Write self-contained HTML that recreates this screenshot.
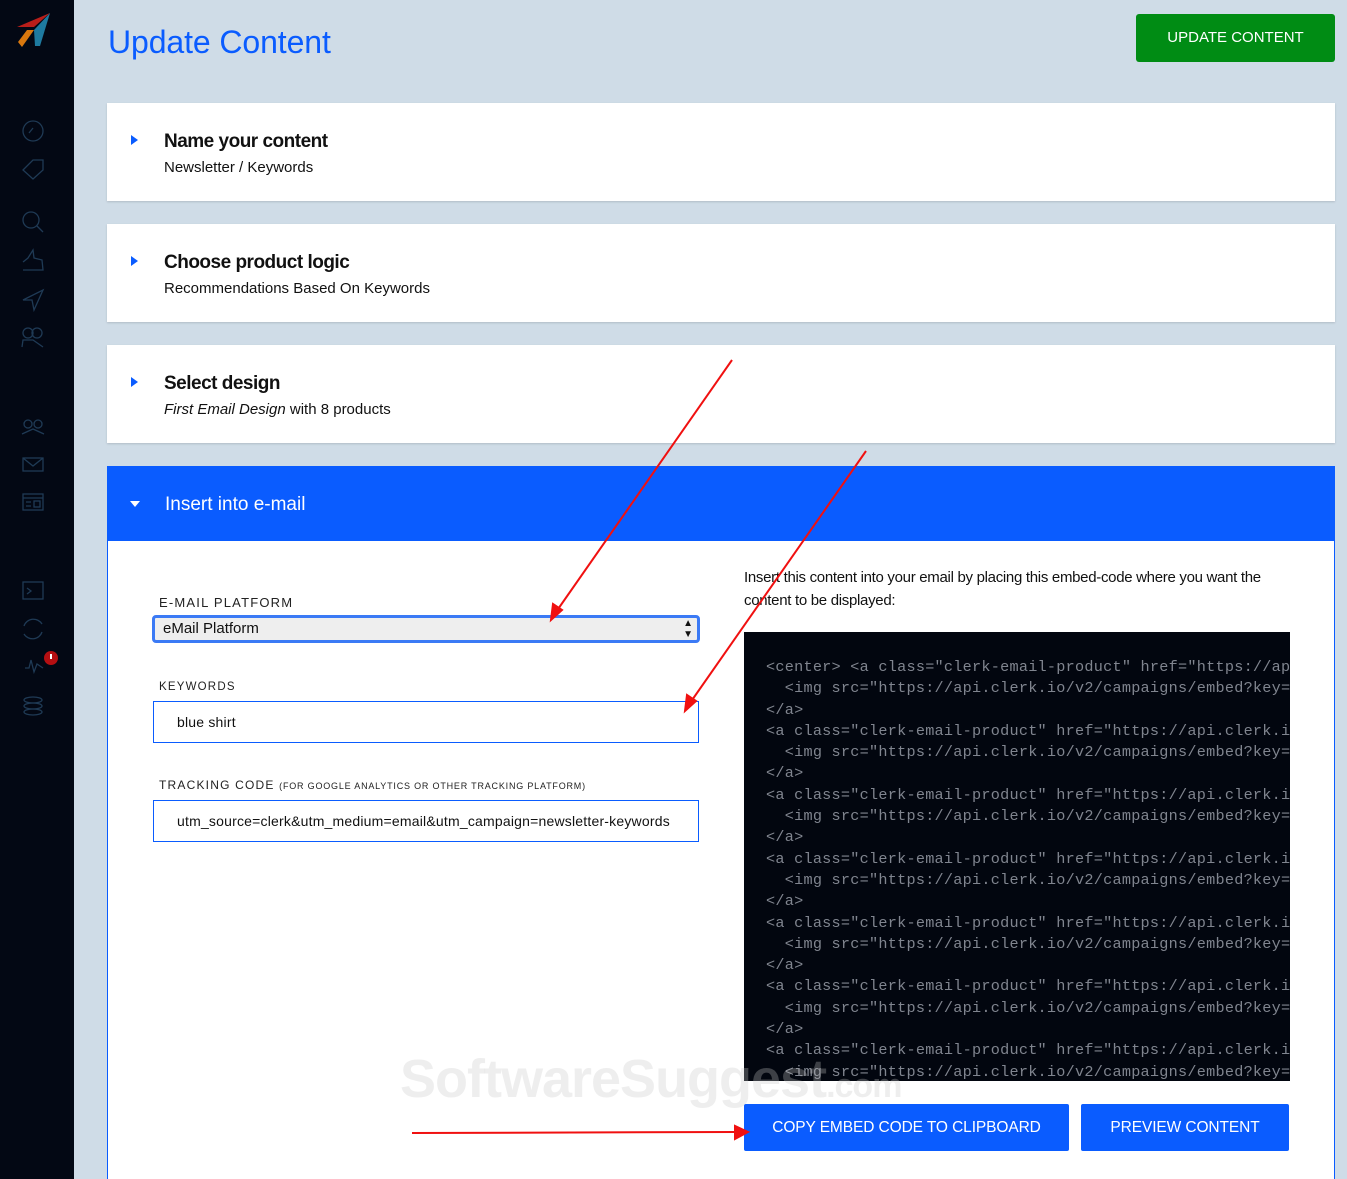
<!DOCTYPE html>
<html><head><meta charset="utf-8"><style>
*{margin:0;padding:0;box-sizing:border-box}
body{width:1347px;height:1179px;overflow:hidden;background:#cfdce7;font-family:"Liberation Sans",sans-serif;position:relative;color:#111}
.side{position:absolute;left:0;top:0;width:74px;height:1179px;background:#030814}
.side svg{position:absolute;left:0;top:0}
.a{position:absolute}
h1{position:absolute;left:108px;top:24px;font-size:32px;font-weight:normal;color:#0a5cff;letter-spacing:-0.1px}
.btn-g{position:absolute;left:1136px;top:14px;width:199px;height:48px;background:#008c14;border-radius:3px;color:#fff;font-size:15px;text-align:center;line-height:48px;letter-spacing:0px}
.card{position:absolute;left:107px;width:1228px;height:98px;background:#fff;box-shadow:0 1px 2px rgba(0,0,0,.15)}
.card .tri{position:absolute;left:24px;top:32px;width:0;height:0;border-top:5px solid transparent;border-bottom:5px solid transparent;border-left:7px solid #0a5cff}
.card .t{position:absolute;left:57px;top:28px;font-size:19px;font-weight:bold;letter-spacing:-0.5px}
.card .s{position:absolute;left:57px;top:56px;font-size:15px;letter-spacing:0px}
.big{position:absolute;left:107px;top:466px;width:1228px;height:713px;background:#fff;border:1px solid #0a5cff;border-bottom:none}
.bh{position:absolute;left:0;top:0;width:100%;height:74px;background:#0a5cff}
.bh .tri{position:absolute;left:22px;top:34px;border-left:5px solid transparent;border-right:5px solid transparent;border-top:6px solid #fff}
.bh .t{position:absolute;left:57px;top:27px;color:#fff;font-size:19px;letter-spacing:0px}
.lbl{position:absolute;font-size:12px;letter-spacing:1.2px;color:#222}
.inp{position:absolute;left:153px;width:546px;height:42px;border:1px solid #0a5cff;background:#fff;font-size:14px;padding-left:23px;line-height:40px;white-space:nowrap;overflow:hidden;letter-spacing:0.2px}
.code{position:absolute;left:744px;top:632px;width:546px;height:449px;background:#02060f;overflow:hidden;padding:25px 0 0 22px}
.code pre{font-family:"Liberation Mono",monospace;font-size:15.2px;letter-spacing:0.25px;line-height:21.3px;color:#80858f}
.btnb{position:absolute;top:1104px;height:47px;background:#0a5cff;color:#fff;font-size:15.5px;text-align:center;line-height:47px;border-radius:2px;letter-spacing:-0.1px}
.wm{position:absolute;left:400px;top:1048px;font-size:54px;font-weight:bold;color:rgba(200,200,200,.3);letter-spacing:-1px}
</style></head><body>
<div class="side">
<svg width="74" height="730" fill="none" stroke="#1f3a55" stroke-width="1.3">
<polygon points="17,27 50,13 34,27" fill="#b81e1a" stroke="none"/>
<polygon points="18,42 27,30 34,30 22,47" fill="#d9780e" stroke="none"/>
<polygon points="34,30 50,13 40,46 35,46" fill="#1e7aa0" stroke="none"/>
<circle cx="33" cy="131" r="10"/><path d="M29,133 L33,128"/>
<path d="M23,170 L33,160 L43,160 L43,170 L33,179 Z"/>
<circle cx="31" cy="220" r="8"/><path d="M37,226 L43,232"/>
<path d="M23,270 L43,270 L42,260 L34,258 L33,250 L28,258 L23,262"/>
<path d="M23,300 L43,290 L34,310 L32,300 Z"/>
<circle cx="28" cy="333" r="5"/><circle cx="37" cy="333" r="5"/><path d="M22,347 L23,340 L33,340 L43,347"/>
<circle cx="28" cy="424" r="4"/><circle cx="38" cy="424" r="4"/><path d="M22,434 L33,429 L44,434"/>
<rect x="23" y="458" width="20" height="13"/><path d="M23,458 L33,466 L43,458"/>
<rect x="23" y="494" width="20" height="16"/><path d="M23,498 L43,498 M26,502 L31,502 M26,506 L31,506"/><rect x="34" y="501" width="6" height="6"/>
<rect x="23" y="582" width="20" height="17"/><path d="M27,588 L31,591 L27,594"/>
<path d="M42,624 A10,10 0 0 0 24,626 M24,634 A10,10 0 0 0 42,632"/>
<path d="M25,668 L29,668 L31,660 L34,672 L37,664 L43,668"/>
<ellipse cx="33" cy="700" rx="9" ry="3"/><ellipse cx="33" cy="706" rx="9" ry="3"/><ellipse cx="33" cy="712" rx="9" ry="3"/>
<circle cx="51" cy="658" r="7" fill="#b50f12" stroke="none"/>
<path d="M51,654 L51,659" stroke="#fff" stroke-width="2"/>
</svg>
</div>
<h1>Update Content</h1>
<div class="btn-g">UPDATE CONTENT</div>

<div class="card" style="top:103px"><div class="tri"></div><div class="t">Name your content</div><div class="s">Newsletter / Keywords</div></div>
<div class="card" style="top:224px"><div class="tri"></div><div class="t">Choose product logic</div><div class="s">Recommendations Based On Keywords</div></div>
<div class="card" style="top:345px"><div class="tri"></div><div class="t">Select design</div><div class="s"><i>First Email Design</i> with 8 products</div></div>

<div class="big"><div class="bh"><div class="tri"></div><div class="t">Insert into e-mail</div></div></div>

<div class="lbl" style="left:159px;top:595px;font-size:13px">E-MAIL PLATFORM</div>
<div class="a" style="left:152px;top:615px;width:548px;height:28px;border:3px solid #3b7af5;border-radius:4px;background:#eee;font-size:15px;line-height:22px;padding-left:8px">eMail Platform<span style="position:absolute;right:4px;top:0;font-size:10px;line-height:11px">▲<br>▼</span></div>
<div class="lbl" style="left:159px;top:681px;font-size:11.5px">KEYWORDS</div>
<div class="inp" style="top:701px">blue shirt</div>
<div class="lbl" style="left:159px;top:778px;font-size:12px">TRACKING CODE <span style="font-size:9px;letter-spacing:0.8px">(FOR GOOGLE ANALYTICS OR OTHER TRACKING PLATFORM)</span></div>
<div class="inp" style="top:800px">utm_source=clerk&amp;utm_medium=email&amp;utm_campaign=newsletter-keywords</div>

<div class="a" style="left:744px;top:566px;width:560px;font-size:15px;line-height:23px;letter-spacing:-0.3px">Insert this content into your email by placing this embed-code where you want the content to be displayed:</div>

<div class="code"><pre>&lt;center&gt; &lt;a class="clerk-email-product" href="https://api.clerk.io
  &lt;img src="https://api.clerk.io/v2/campaigns/embed?key=
&lt;/a&gt;
&lt;a class="clerk-email-product" href="https://api.clerk.io/v2
  &lt;img src="https://api.clerk.io/v2/campaigns/embed?key=
&lt;/a&gt;
&lt;a class="clerk-email-product" href="https://api.clerk.io/v2
  &lt;img src="https://api.clerk.io/v2/campaigns/embed?key=
&lt;/a&gt;
&lt;a class="clerk-email-product" href="https://api.clerk.io/v2
  &lt;img src="https://api.clerk.io/v2/campaigns/embed?key=
&lt;/a&gt;
&lt;a class="clerk-email-product" href="https://api.clerk.io/v2
  &lt;img src="https://api.clerk.io/v2/campaigns/embed?key=
&lt;/a&gt;
&lt;a class="clerk-email-product" href="https://api.clerk.io/v2
  &lt;img src="https://api.clerk.io/v2/campaigns/embed?key=
&lt;/a&gt;
&lt;a class="clerk-email-product" href="https://api.clerk.io/v2
  &lt;img src="https://api.clerk.io/v2/campaigns/embed?key=
&lt;/a&gt;</pre></div>

<div class="wm">SoftwareSuggest<span style="font-size:34px">.com</span></div>
<div class="btnb" style="left:744px;width:325px">COPY EMBED CODE TO CLIPBOARD</div>
<div class="btnb" style="left:1081px;width:208px">PREVIEW CONTENT</div>

<svg class="a" style="left:0;top:0" width="1347" height="1179">
<g stroke="#f01010" stroke-width="2" fill="#f01010">
<line x1="732" y1="360" x2="556" y2="612"/>
<polygon points="551,620 553,604 562,610"/>
<line x1="866" y1="451" x2="690" y2="703"/>
<polygon points="685,711 687,695 696,701"/>
<line x1="412" y1="1133" x2="736" y2="1132"/>
<polygon points="748,1132 735,1126 735,1139"/>
</g>
</svg>
</body></html>
